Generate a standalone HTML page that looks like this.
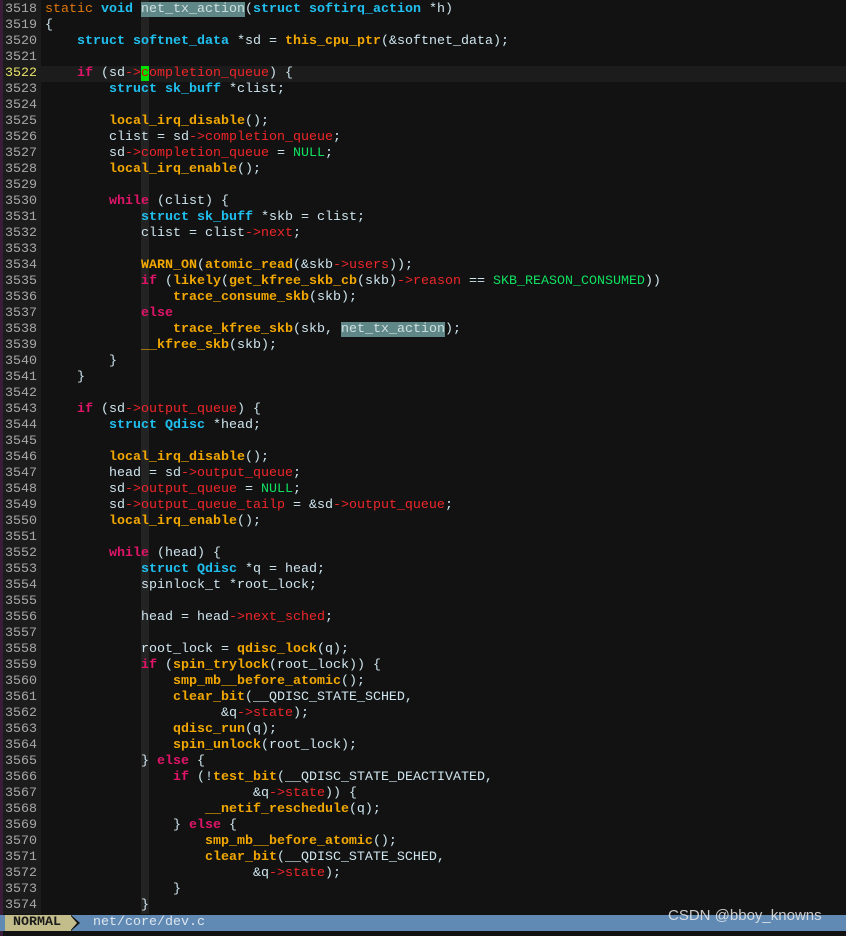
<!DOCTYPE html>
<html><head><meta charset="utf-8"><style>
html,body{margin:0;padding:0;background:#121212;width:846px;height:936px;overflow:hidden}
body{position:relative;font-family:"Liberation Mono","DejaVu Sans Mono",monospace;font-size:13.33px;color:#cfe6ef}
#strip{position:absolute;left:0;top:0;width:3px;height:936px;background:#3a1d38}
#gut{position:absolute;left:3px;top:0;width:38px;height:914px;background:#1c1c1c}
#ccol{position:absolute;left:141px;top:0;width:8px;height:914px;background:#232323}
#cline{position:absolute;left:41px;top:66px;width:805px;height:16px;background:#1c1c1c}
#code{position:absolute;left:5px;top:2px;white-space:pre;line-height:16px}
.n{color:#a8a8a8}.ny{color:#e6e26a}
.k{color:#20c0f0;font-weight:bold}.s{color:#e0780c}.f{color:#f2a800;font-weight:bold}
.c{color:#e0156a;font-weight:bold}.m{color:#f0262a}.g{color:#10e060}
.h{background:#5f8787;color:#d0e0e0}.cur{background:#00e000;color:#e00000}
#status{position:absolute;left:0;top:915px;width:846px;height:16px;background:#6089b4}
#mode{position:absolute;left:5px;top:915px;width:66px;height:16px;background:#c2bd8a;color:#1a1a1a;font-weight:bold;line-height:16px;padding-left:8px;box-sizing:border-box}
#arr{position:absolute;left:71px;top:915px;width:0;height:0;border-top:8px solid transparent;border-bottom:8px solid transparent;border-left:9px solid #111}
#arr2{position:absolute;left:70px;top:915px;width:0;height:0;border-top:8px solid transparent;border-bottom:8px solid transparent;border-left:7px solid #c2bd8a}
#file{position:absolute;left:93px;top:915px;line-height:16px;color:#dde6ee}
#wm{position:absolute;left:668px;top:907px;font-family:"Liberation Sans",sans-serif;font-size:15px;color:#e8e8e8;opacity:.85}
</style></head><body>
<div id="strip"></div><div id="gut"></div><div id="cline"></div><div id="ccol"></div>
<div id="code"><span class="n">3518 </span><span class="s">static</span> <span class="k">void</span> <span class="h">net_tx_action</span>(<span class="k">struct</span> <span class="k">softirq_action</span> *h)
<span class="n">3519 </span>{
<span class="n">3520 </span>    <span class="k">struct</span> <span class="k">softnet_data</span> *sd = <span class="f">this_cpu_ptr</span>(&amp;softnet_data);
<span class="n">3521 </span>
<span class="ny">3522 </span>    <span class="c">if</span> (sd<span class="m">-&gt;</span><span class="cur">c</span><span class="m">ompletion_queue</span>) {
<span class="n">3523 </span>        <span class="k">struct</span> <span class="k">sk_buff</span> *clist;
<span class="n">3524 </span>
<span class="n">3525 </span>        <span class="f">local_irq_disable</span>();
<span class="n">3526 </span>        clist = sd<span class="m">-&gt;completion_queue</span>;
<span class="n">3527 </span>        sd<span class="m">-&gt;completion_queue</span> = <span class="g">NULL</span>;
<span class="n">3528 </span>        <span class="f">local_irq_enable</span>();
<span class="n">3529 </span>
<span class="n">3530 </span>        <span class="c">while</span> (clist) {
<span class="n">3531 </span>            <span class="k">struct</span> <span class="k">sk_buff</span> *skb = clist;
<span class="n">3532 </span>            clist = clist<span class="m">-&gt;next</span>;
<span class="n">3533 </span>
<span class="n">3534 </span>            <span class="f">WARN_ON</span>(<span class="f">atomic_read</span>(&amp;skb<span class="m">-&gt;users</span>));
<span class="n">3535 </span>            <span class="c">if</span> (<span class="f">likely</span>(<span class="f">get_kfree_skb_cb</span>(skb)<span class="m">-&gt;reason</span> == <span class="g">SKB_REASON_CONSUMED</span>))
<span class="n">3536 </span>                <span class="f">trace_consume_skb</span>(skb);
<span class="n">3537 </span>            <span class="c">else</span>
<span class="n">3538 </span>                <span class="f">trace_kfree_skb</span>(skb, <span class="h">net_tx_action</span>);
<span class="n">3539 </span>            <span class="f">__kfree_skb</span>(skb);
<span class="n">3540 </span>        }
<span class="n">3541 </span>    }
<span class="n">3542 </span>
<span class="n">3543 </span>    <span class="c">if</span> (sd<span class="m">-&gt;output_queue</span>) {
<span class="n">3544 </span>        <span class="k">struct</span> <span class="k">Qdisc</span> *head;
<span class="n">3545 </span>
<span class="n">3546 </span>        <span class="f">local_irq_disable</span>();
<span class="n">3547 </span>        head = sd<span class="m">-&gt;output_queue</span>;
<span class="n">3548 </span>        sd<span class="m">-&gt;output_queue</span> = <span class="g">NULL</span>;
<span class="n">3549 </span>        sd<span class="m">-&gt;output_queue_tailp</span> = &amp;sd<span class="m">-&gt;output_queue</span>;
<span class="n">3550 </span>        <span class="f">local_irq_enable</span>();
<span class="n">3551 </span>
<span class="n">3552 </span>        <span class="c">while</span> (head) {
<span class="n">3553 </span>            <span class="k">struct</span> <span class="k">Qdisc</span> *q = head;
<span class="n">3554 </span>            spinlock_t *root_lock;
<span class="n">3555 </span>
<span class="n">3556 </span>            head = head<span class="m">-&gt;next_sched</span>;
<span class="n">3557 </span>
<span class="n">3558 </span>            root_lock = <span class="f">qdisc_lock</span>(q);
<span class="n">3559 </span>            <span class="c">if</span> (<span class="f">spin_trylock</span>(root_lock)) {
<span class="n">3560 </span>                <span class="f">smp_mb__before_atomic</span>();
<span class="n">3561 </span>                <span class="f">clear_bit</span>(__QDISC_STATE_SCHED,
<span class="n">3562 </span>                      &amp;q<span class="m">-&gt;state</span>);
<span class="n">3563 </span>                <span class="f">qdisc_run</span>(q);
<span class="n">3564 </span>                <span class="f">spin_unlock</span>(root_lock);
<span class="n">3565 </span>            } <span class="c">else</span> {
<span class="n">3566 </span>                <span class="c">if</span> (!<span class="f">test_bit</span>(__QDISC_STATE_DEACTIVATED,
<span class="n">3567 </span>                          &amp;q<span class="m">-&gt;state</span>)) {
<span class="n">3568 </span>                    <span class="f">__netif_reschedule</span>(q);
<span class="n">3569 </span>                } <span class="c">else</span> {
<span class="n">3570 </span>                    <span class="f">smp_mb__before_atomic</span>();
<span class="n">3571 </span>                    <span class="f">clear_bit</span>(__QDISC_STATE_SCHED,
<span class="n">3572 </span>                          &amp;q<span class="m">-&gt;state</span>);
<span class="n">3573 </span>                }
<span class="n">3574 </span>            }</div>
<div id="status"></div>
<div id="mode">NORMAL</div>
<div id="arr"></div><div id="arr2"></div>
<div id="file">net/core/dev.c</div>
<div id="wm">CSDN @bboy_knowns</div>
</body></html>
